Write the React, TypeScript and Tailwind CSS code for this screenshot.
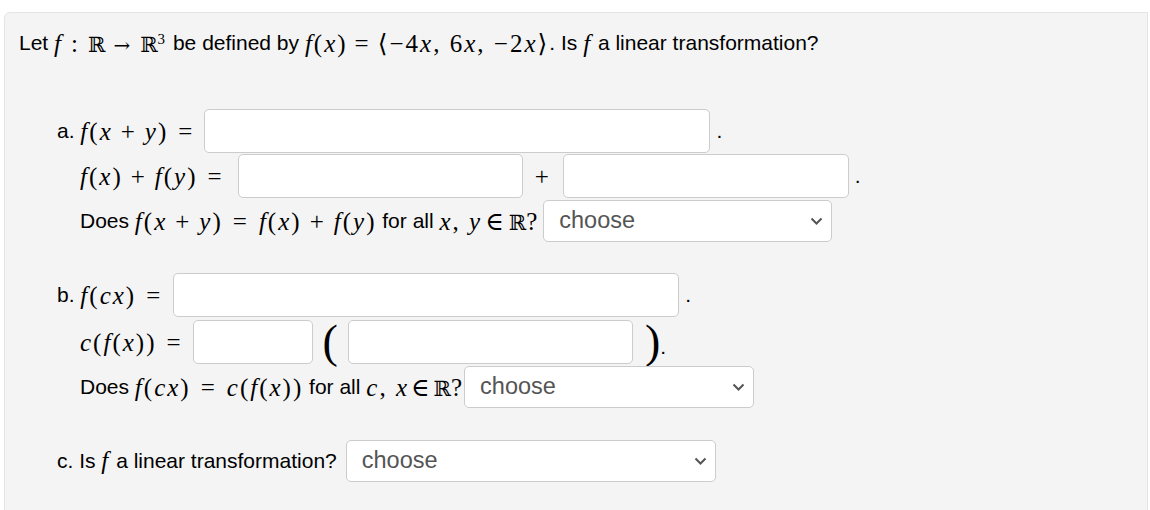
import React from "react";

const serif = "font-['Liberation_Serif','DejaVu_Serif',serif] text-[25px] leading-none tracking-[2px]";

function V({ children }: { children: React.ReactNode }) {
  return <span className="italic">{children}</span>;
}

function R() {
  return <span className="font-['DejaVu_Serif',serif] text-[21px] tracking-normal">ℝ</span>;
}

function Eq({ tight }: { tight?: boolean }) {
  return <span className={tight ? "mx-[7px]" : "mx-[10px]"}>=</span>;
}

function Plus() {
  return <span className="mx-[8px]">+</span>;
}

function M({ children }: { children: React.ReactNode }) {
  return <span className={serif}>{children}</span>;
}

function Box({ w }: { w: string }) {
  return <div className={`h-[44px] shrink-0 rounded-[5px] border border-[#cccccc] bg-white ${w}`} />;
}

function Choose({ w }: { w: string }) {
  return (
    <div
      className={`flex h-[42px] shrink-0 items-center justify-between rounded-[5px] border border-[#cccccc] bg-white pl-[15px] pr-[8px] ${w}`}
    >
      <span className="text-[23.5px] text-[#555555]">choose</span>
      <svg width="13" height="8" viewBox="0 0 13 8" fill="none">
        <path d="M1.5 1.5l5 5 5-5" stroke="#555555" strokeWidth="2" />
      </svg>
    </div>
  );
}

export default function App() {
  return (
    <div className="min-h-[510px] bg-white pl-[4px] pt-[12px] font-['Liberation_Sans',Arial,sans-serif] text-[21px] text-black">
      <div className="min-h-[520px] w-[1144px] rounded-tl-[6px] border border-[#e4e4e4] bg-[#f4f4f4] pl-[14px] pt-[10px]">
        <div className="flex h-[40px] items-center whitespace-nowrap">
          <span>Let&nbsp;</span>
          <M>
            <V>f</V>
            <span className="mx-[8px]">:</span>
            <R />
            <span className="mx-[8px] font-['DejaVu_Serif',serif] text-[20px]">→</span>
            <R />
            <sup className="text-[15px]">3</sup>
          </M>
          <span>&nbsp;be defined by&nbsp;</span>
          <M>
            <V>f</V>(<V>x</V>)<Eq tight />⟨−4<V>x</V>, 6<V>x</V>, −2<V>x</V>⟩
          </M>
          <span>. Is&nbsp;</span>
          <M>
            <V>f</V>
          </M>
          <span>&nbsp;a linear transformation?</span>
        </div>

        <div className="mt-[46px] pl-[38px]">
          <div className="flex h-[44px] items-center whitespace-nowrap">
            <span>a.&nbsp;</span>
            <M>
              <V>f</V>(<V>x</V>
              <Plus />
              <V>y</V>)<Eq />
            </M>
            <Box w="w-[506px]" />
            <span className="ml-[6px]">.</span>
          </div>

          <div className="mt-[1px] flex h-[44px] items-center whitespace-nowrap pl-[23px]">
            <M>
              <V>f</V>(<V>x</V>)<Plus />
              <V>f</V>(<V>y</V>)<Eq />
            </M>
            <div className="ml-[4px]">
              <Box w="w-[285px]" />
            </div>
            <span className={`${serif} mx-[12px]`}>+</span>
            <Box w="w-[286px]" />
            <span className="ml-[6px]">.</span>
          </div>

          <div className="mt-[2px] flex h-[42px] items-center whitespace-nowrap pl-[23px]">
            <span>Does&nbsp;</span>
            <M>
              <V>f</V>(<V>x</V>
              <Plus />
              <V>y</V>)<Eq />
              <V>f</V>(<V>x</V>)<Plus />
              <V>f</V>(<V>y</V>)
            </M>
            <span>&nbsp;for all&nbsp;</span>
            <M>
              <V>x</V>, <V>y</V>
              <span className="mx-[3px]">∈</span>
              <R />?
            </M>
            <div className="ml-[4px]">
              <Choose w="w-[289px]" />
            </div>
          </div>

          <div className="mt-[31px] flex h-[44px] items-center whitespace-nowrap">
            <span>b.&nbsp;</span>
            <M>
              <V>f</V>(<V>cx</V>)<Eq />
            </M>
            <div className="ml-[1px]">
              <Box w="w-[506px]" />
            </div>
            <span className="ml-[6px]">.</span>
          </div>

          <div className="mt-[3px] flex h-[44px] items-center whitespace-nowrap pl-[23px]">
            <M>
              <V>c</V>(<V>f</V>(<V>x</V>))<Eq />
            </M>
            <Box w="w-[120px]" />
            <span className="mx-[10px] font-['Liberation_Serif',serif] text-[46px] font-light leading-none">(</span>
            <Box w="w-[285px]" />
            <span className="ml-[12px] font-['Liberation_Serif',serif] text-[46px] font-light leading-none">)</span>
            <span className="mt-[10px]">.</span>
          </div>

          <div className="mt-[2px] flex h-[42px] items-center whitespace-nowrap pl-[23px]">
            <span>Does&nbsp;</span>
            <M>
              <V>f</V>(<V>cx</V>)<Eq />
              <V>c</V>(<V>f</V>(<V>x</V>))
            </M>
            <span>&nbsp;for all&nbsp;</span>
            <M>
              <V>c</V>, <V>x</V>
              <span className="mx-[2px]">∈</span>
              <R />?
            </M>
            <Choose w="w-[290px]" />
          </div>

          <div className="mt-[31px] flex h-[43px] items-center whitespace-nowrap">
            <span>c. Is&nbsp;</span>
            <M>
              <V>f</V>
            </M>
            <span>&nbsp;a linear transformation?</span>
            <div className="ml-[9px]">
              <Choose w="w-[370px]" />
            </div>
          </div>
        </div>
      </div>
    </div>
  );
}
